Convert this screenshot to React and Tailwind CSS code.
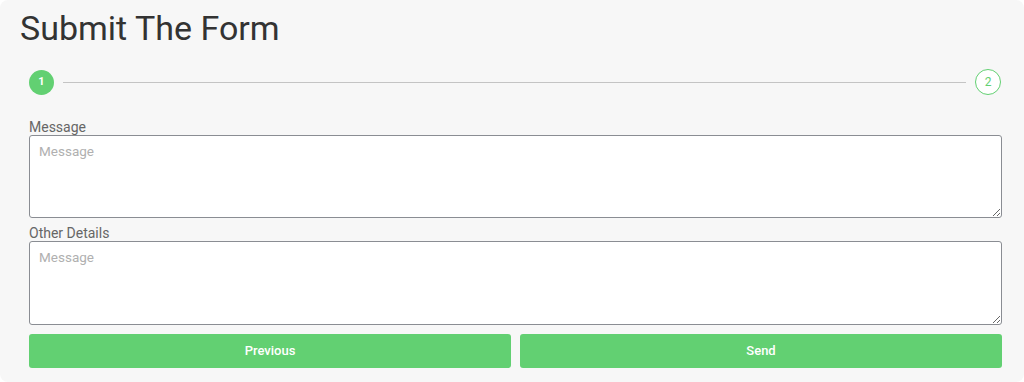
export default function App() {
  return (
    <div className="w-[1024px] h-[382px] bg-white font-['Roboto',sans-serif]">
      <div className="h-full rounded-lg bg-[#f7f7f7] pt-[6px]">
        <h1 className="pl-[20px] text-[34px] leading-[44px] text-[#333] font-normal">
          Submit The Form
        </h1>

        {/* Stepper */}
        <div className="mt-[19px] flex items-center pl-[29px] pr-[23px]">
          <div className="w-[25px] h-[25px] rounded-full bg-[#62d072] text-white text-[11px] font-bold flex items-center justify-center">
            1
          </div>
          <div className="flex-1 h-px bg-[#c4c4c4] mx-[9px]" />
          <div className="w-[26px] h-[26px] rounded-full border border-[#62d072] bg-white text-[#62d072] text-[12px] flex items-center justify-center">
            2
          </div>
        </div>

        <form className="mt-[24px] pl-[29px] pr-[22px] flex flex-col">
          <label className="text-[14px] leading-[16px] text-[#666]">Message</label>
          <textarea
            placeholder="Message"
            className="h-[83px] w-full rounded-[3px] border border-[#8a8d93] bg-white px-[9px] py-[5px] text-[13.5px] placeholder:text-[#b0b0b0] outline-none"
          />
          <label className="mt-[8px] text-[14px] leading-[15px] text-[#666]">Other Details</label>
          <textarea
            placeholder="Message"
            className="h-[84px] w-full rounded-[3px] border border-[#8a8d93] bg-white px-[9px] py-[5px] text-[13.5px] placeholder:text-[#b0b0b0] outline-none"
          />
          <div className="mt-[9px] grid grid-cols-2 gap-[9px]">
            <button type="button" className="h-[34px] rounded-[3px] bg-[#62d072] text-white text-[13px] font-medium">
              Previous
            </button>
            <button type="button" className="h-[34px] rounded-[3px] bg-[#62d072] text-white text-[13px] font-medium">
              Send
            </button>
          </div>
        </form>
      </div>
    </div>
  );
}
